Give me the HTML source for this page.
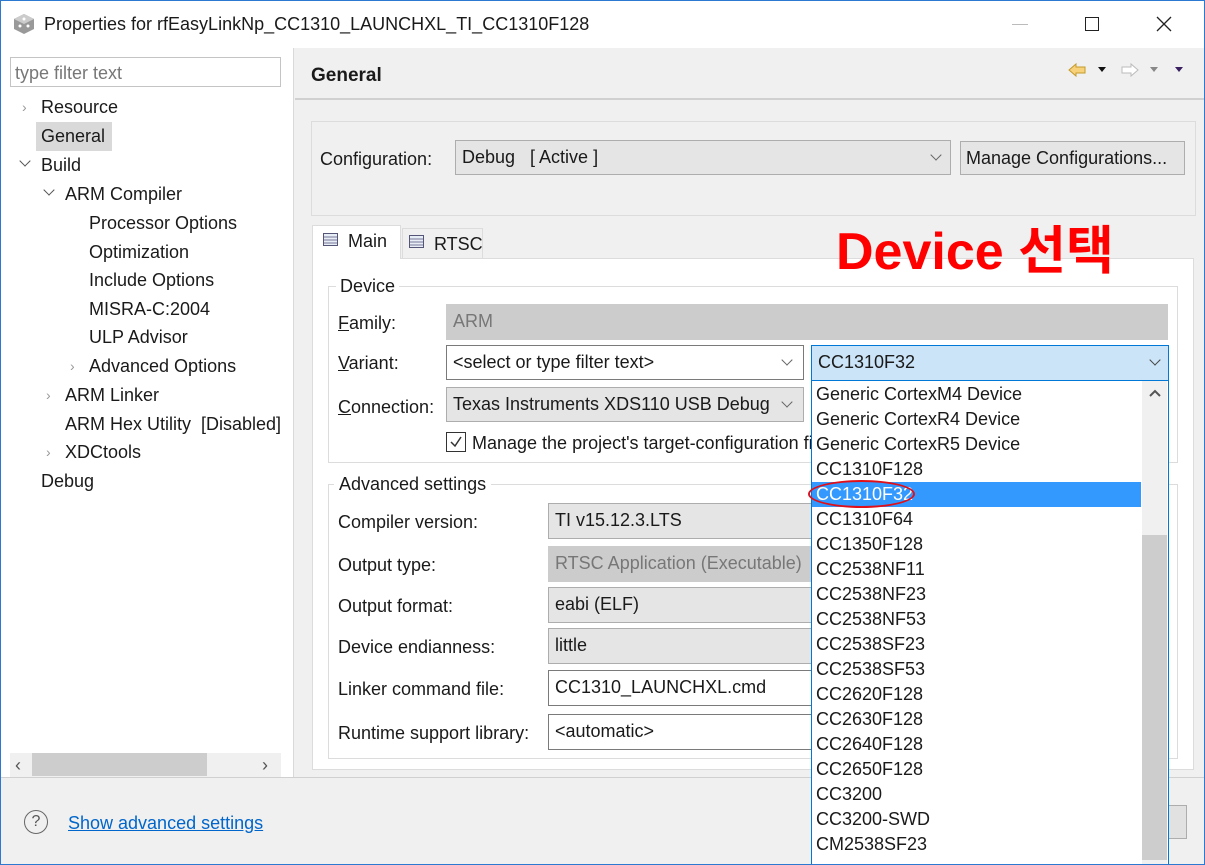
<!DOCTYPE html>
<html style="overflow:hidden"><head><meta charset="utf-8"><style>
*{box-sizing:border-box;margin:0;padding:0}
html,body{width:1205px;height:865px;overflow:hidden}
body{background:#f0f0f0;font-family:"Liberation Sans","Noto Sans CJK KR",sans-serif;font-size:18px;color:#1a1a1a;position:relative}
.a{position:absolute;white-space:nowrap}
.t{position:absolute;white-space:nowrap;line-height:20px}
.f{position:absolute;border:1px solid #adadad;background:#e5e5e5;padding-left:6px;line-height:33px;overflow:hidden}
.w{background:#fff;border-color:#7a7a7a}
.chev{position:absolute;width:8px;height:8px;border-right:1.5px solid #555;border-bottom:1.5px solid #555;transform:rotate(45deg)}
.li{position:absolute;left:816px;line-height:25px;height:25px}
</style></head><body>
<div class="a" style="left:0;top:0;width:1205px;height:865px;border:1px solid #2b79d0;pointer-events:none;z-index:9"></div>
<div class="a" style="left:0;top:0;width:1205px;height:48px;background:#fff"></div>
<svg class="a" style="left:12px;top:12px" width="24" height="24"><path d="M12 2 L22 7 L22 17 L12 22 L2 17 L2 7Z" fill="#999"/><path d="M12 2 L22 7 L12 12 L2 7Z" fill="#ccc"/><circle cx="8" cy="14" r="1.5" fill="#fff"/><circle cx="16" cy="14" r="1.5" fill="#fff"/><circle cx="12" cy="7" r="1.5" fill="#fff"/></svg>
<div class="t" style="left:44px;top:14px;font-size:18px">Properties for rfEasyLinkNp_CC1310_LAUNCHXL_TI_CC1310F128</div>
<div class="a" style="left:1012px;top:24px;width:16px;height:1px;background:#bbb"></div>
<div class="a" style="left:1085px;top:17px;width:14px;height:14px;border:1.3px solid #222"></div>
<svg class="a" style="left:1156px;top:16px" width="16" height="16"><path d="M1 1L15 15M15 1L1 15" stroke="#222" stroke-width="1.3"/></svg>
<div class="a" style="left:1px;top:48px;width:293px;height:730px;background:#fff;border-right:1px solid #d9d9d9"></div>
<div class="a" style="left:10px;top:57px;width:271px;height:30px;border:1px solid #c4c4c4;background:#fff"></div>
<div class="t" style="left:15px;top:63px;color:#777">type filter text</div>
<div class="a" style="left:36px;top:122px;width:76px;height:29px;background:#d9d9d9"></div>
<div class="t" style="left:22px;top:97px;color:#999;font-size:14px">›</div>
<div class="t" style="left:41px;top:97px">Resource</div>
<div class="t" style="left:41px;top:126px">General</div>
<div class="chev" style="left:21px;top:157px"></div>
<div class="t" style="left:41px;top:155px">Build</div>
<div class="chev" style="left:45px;top:186px"></div>
<div class="t" style="left:65px;top:184px">ARM Compiler</div>
<div class="t" style="left:89px;top:213px">Processor Options</div>
<div class="t" style="left:89px;top:242px">Optimization</div>
<div class="t" style="left:89px;top:270px">Include Options</div>
<div class="t" style="left:89px;top:299px">MISRA-C:2004</div>
<div class="t" style="left:89px;top:327px">ULP Advisor</div>
<div class="t" style="left:70px;top:356px;color:#999;font-size:14px">›</div>
<div class="t" style="left:89px;top:356px">Advanced Options</div>
<div class="t" style="left:46px;top:385px;color:#999;font-size:14px">›</div>
<div class="t" style="left:65px;top:385px">ARM Linker</div>
<div class="t" style="left:65px;top:414px;width:216px;overflow:hidden">ARM Hex Utility&nbsp;&nbsp;[Disabled]</div>
<div class="t" style="left:46px;top:442px;color:#999;font-size:14px">›</div>
<div class="t" style="left:65px;top:442px">XDCtools</div>
<div class="t" style="left:41px;top:471px">Debug</div>
<div class="a" style="left:10px;top:753px;width:271px;height:24px;background:#f0f0f0"></div>
<div class="a" style="left:32px;top:753px;width:175px;height:23px;background:#cdcdcd"></div>
<div class="t" style="left:15px;top:755px;font-size:18px;color:#555">‹</div>
<div class="t" style="left:262px;top:755px;font-size:18px;color:#555">›</div>
<div class="a" style="left:295px;top:48px;width:910px;height:52px;background:#f0f0f0;border-bottom:2px solid #d0d0d0"></div>
<div class="t" style="left:311px;top:66px;font-weight:bold;font-size:19px">General</div>
<svg class="a" style="left:1067px;top:60px" width="125" height="20"><path d="M2 10 L9 4 L9 7 L18 7 L18 13 L9 13 L9 16Z" fill="#f7d27a" stroke="#c59a2a"/><path d="M31 7 L39 7 L35 12Z" fill="#111"/><path d="M71 10 L64 4 L64 7 L55 7 L55 13 L64 13 L64 16Z" fill="#fff" stroke="#bbb"/><path d="M83 7 L91 7 L87 12Z" fill="#888"/><path d="M108 7 L116 7 L112 12Z" fill="#3a2060"/></svg>
<div class="a" style="left:311px;top:121px;width:885px;height:95px;border:1px solid #dcdcdc"></div>
<div class="t" style="left:320px;top:149px">Configuration:</div>
<div class="f" style="left:455px;top:140px;width:496px;height:35px">Debug&nbsp;&nbsp;&nbsp;[ Active ]</div>
<div class="chev" style="left:932px;top:151px;border-color:#666"></div>
<div class="f" style="left:960px;top:141px;width:225px;height:34px;padding-left:5px">Manage Configurations...</div>
<div class="a" style="left:312px;top:225px;width:89px;height:36px;background:#fff;border:1px solid #dcdcdc;border-bottom:none"></div>
<div class="a" style="left:402px;top:228px;width:81px;height:31px;background:#f0f0f0;border:1px solid #dcdcdc;border-bottom:none"></div>
<svg class="a" style="left:323px;top:233px" width="16" height="14"><rect x="0.5" y="0.5" width="14" height="12" fill="#e8eef6" stroke="#557"/><path d="M1 4H14M1 7H14M1 10H14" stroke="#779"/></svg>
<svg class="a" style="left:409px;top:235px" width="16" height="14"><rect x="0.5" y="0.5" width="14" height="12" fill="#e8eef6" stroke="#557"/><path d="M1 4H14M1 7H14M1 10H14" stroke="#779"/></svg>
<div class="t" style="left:348px;top:231px">Main</div>
<div class="t" style="left:434px;top:234px">RTSC</div>
<div class="a" style="left:312px;top:258px;width:882px;height:512px;background:#fff;border:1px solid #dcdcdc"></div>
<div class="a" style="left:313px;top:258px;width:87px;height:2px;background:#fff"></div>
<div class="a" style="left:328px;top:286px;width:850px;height:177px;border:1px solid #dcdcdc"></div>
<div class="t" style="left:336px;top:276px;background:#fff;padding:0 4px">Device</div>
<div class="t" style="left:338px;top:313px"><u>F</u>amily:</div>
<div class="f" style="left:446px;top:304px;width:722px;height:36px;background:#ccc;border-color:#ccc;color:#777">ARM</div>
<div class="t" style="left:338px;top:353px"><u>V</u>ariant:</div>
<div class="f w" style="left:446px;top:345px;width:358px;height:35px">&lt;select or type filter text&gt;</div>
<div class="chev" style="left:783px;top:356px;border-color:#666"></div>
<div class="t" style="left:338px;top:397px"><u>C</u>onnection:</div>
<div class="f" style="left:446px;top:387px;width:358px;height:35px">Texas Instruments XDS110 USB Debug Probe</div>
<div class="a" style="left:776px;top:388px;width:27px;height:33px;background:#e5e5e5"></div>
<div class="chev" style="left:783px;top:398px;border-color:#666"></div>
<div class="a" style="left:446px;top:432px;width:20px;height:20px;border:1px solid #333;background:#fff"></div>
<svg class="a" style="left:448px;top:434px" width="16" height="16"><path d="M3 8 L7 12 L13 3" stroke="#333" stroke-width="1.5" fill="none"/></svg>
<div class="t" style="left:472px;top:433px">Manage the project's target-configuration file</div>
<div class="a" style="left:328px;top:484px;width:850px;height:275px;border:1px solid #dcdcdc"></div>
<div class="t" style="left:334px;top:474px;background:#fff;padding:0 5px">Advanced settings</div>
<div class="t" style="left:338px;top:512px">Compiler version:</div>
<div class="f" style="left:548px;top:503px;width:280px;height:36px">TI v15.12.3.LTS</div>
<div class="t" style="left:338px;top:555px">Output type:</div>
<div class="f" style="left:548px;top:546px;width:280px;height:36px;background:#ccc;border-color:#ccc;color:#777">RTSC Application (Executable)</div>
<div class="t" style="left:338px;top:596px">Output format:</div>
<div class="f" style="left:548px;top:587px;width:280px;height:36px">eabi (ELF)</div>
<div class="t" style="left:338px;top:637px">Device endianness:</div>
<div class="f" style="left:548px;top:628px;width:280px;height:36px">little</div>
<div class="t" style="left:338px;top:679px">Linker command file:</div>
<div class="f w" style="left:548px;top:670px;width:280px;height:36px">CC1310_LAUNCHXL.cmd</div>
<div class="t" style="left:338px;top:723px">Runtime support library:</div>
<div class="f w" style="left:548px;top:714px;width:280px;height:36px">&lt;automatic&gt;</div>
<div class="a" style="left:1px;top:777px;width:1203px;height:88px;background:#f0f0f0;border-top:1px solid #d0d0d0"></div>
<div class="a" style="left:24px;top:810px;width:24px;height:24px;border:1.5px solid #666;border-radius:50%;text-align:center;line-height:21px;font-size:16px;color:#555">?</div>
<div class="t" style="left:68px;top:813px;color:#0066cc;text-decoration:underline">Show advanced settings</div>
<div class="a" style="left:1160px;top:805px;width:27px;height:34px;border:1px solid #adadad;background:#e1e1e1"></div>
<div class="t" style="left:836px;top:222px;font-size:52px;line-height:60px;color:#f00;font-weight:bold">Device 선택</div>
<div class="f" style="left:811px;top:345px;width:358px;height:36px;background:#cce4f7;border-color:#0078d7">CC1310F32</div>
<div class="chev" style="left:1151px;top:356px;border-color:#444"></div>
<div class="a" style="left:811px;top:380px;width:358px;height:485px;overflow:hidden;background:#fff;border:1px solid #0078d7;border-bottom:none">
<div class="a" style="left:330px;top:0;width:25px;height:484px;background:#f0f0f0"></div>
<div class="a" style="left:330px;top:154px;width:25px;height:325px;background:#cdcdcd"></div>
<svg class="a" style="left:336px;top:7px" width="14" height="10"><path d="M2 8 L7 3 L12 8" stroke="#555" stroke-width="2" fill="none"/></svg>
<div class="a" style="left:0;top:101px;width:329px;height:25px;background:#3399ff"></div>
</div>
<div class="li" style="top:382px">Generic CortexM4 Device</div>
<div class="li" style="top:407px">Generic CortexR4 Device</div>
<div class="li" style="top:432px">Generic CortexR5 Device</div>
<div class="li" style="top:457px">CC1310F128</div>
<div class="li" style="top:482px;color:#fff">CC1310F32</div>
<div class="li" style="top:507px">CC1310F64</div>
<div class="li" style="top:532px">CC1350F128</div>
<div class="li" style="top:557px">CC2538NF11</div>
<div class="li" style="top:582px">CC2538NF23</div>
<div class="li" style="top:607px">CC2538NF53</div>
<div class="li" style="top:632px">CC2538SF23</div>
<div class="li" style="top:657px">CC2538SF53</div>
<div class="li" style="top:682px">CC2620F128</div>
<div class="li" style="top:707px">CC2630F128</div>
<div class="li" style="top:732px">CC2640F128</div>
<div class="li" style="top:757px">CC2650F128</div>
<div class="li" style="top:782px">CC3200</div>
<div class="li" style="top:807px">CC3200-SWD</div>
<div class="li" style="top:832px">CM2538SF23</div>
<div class="a" style="left:808px;top:480px;width:107px;height:28px;border:2.5px solid #e0101a;border-radius:50%"></div>
</body></html>
